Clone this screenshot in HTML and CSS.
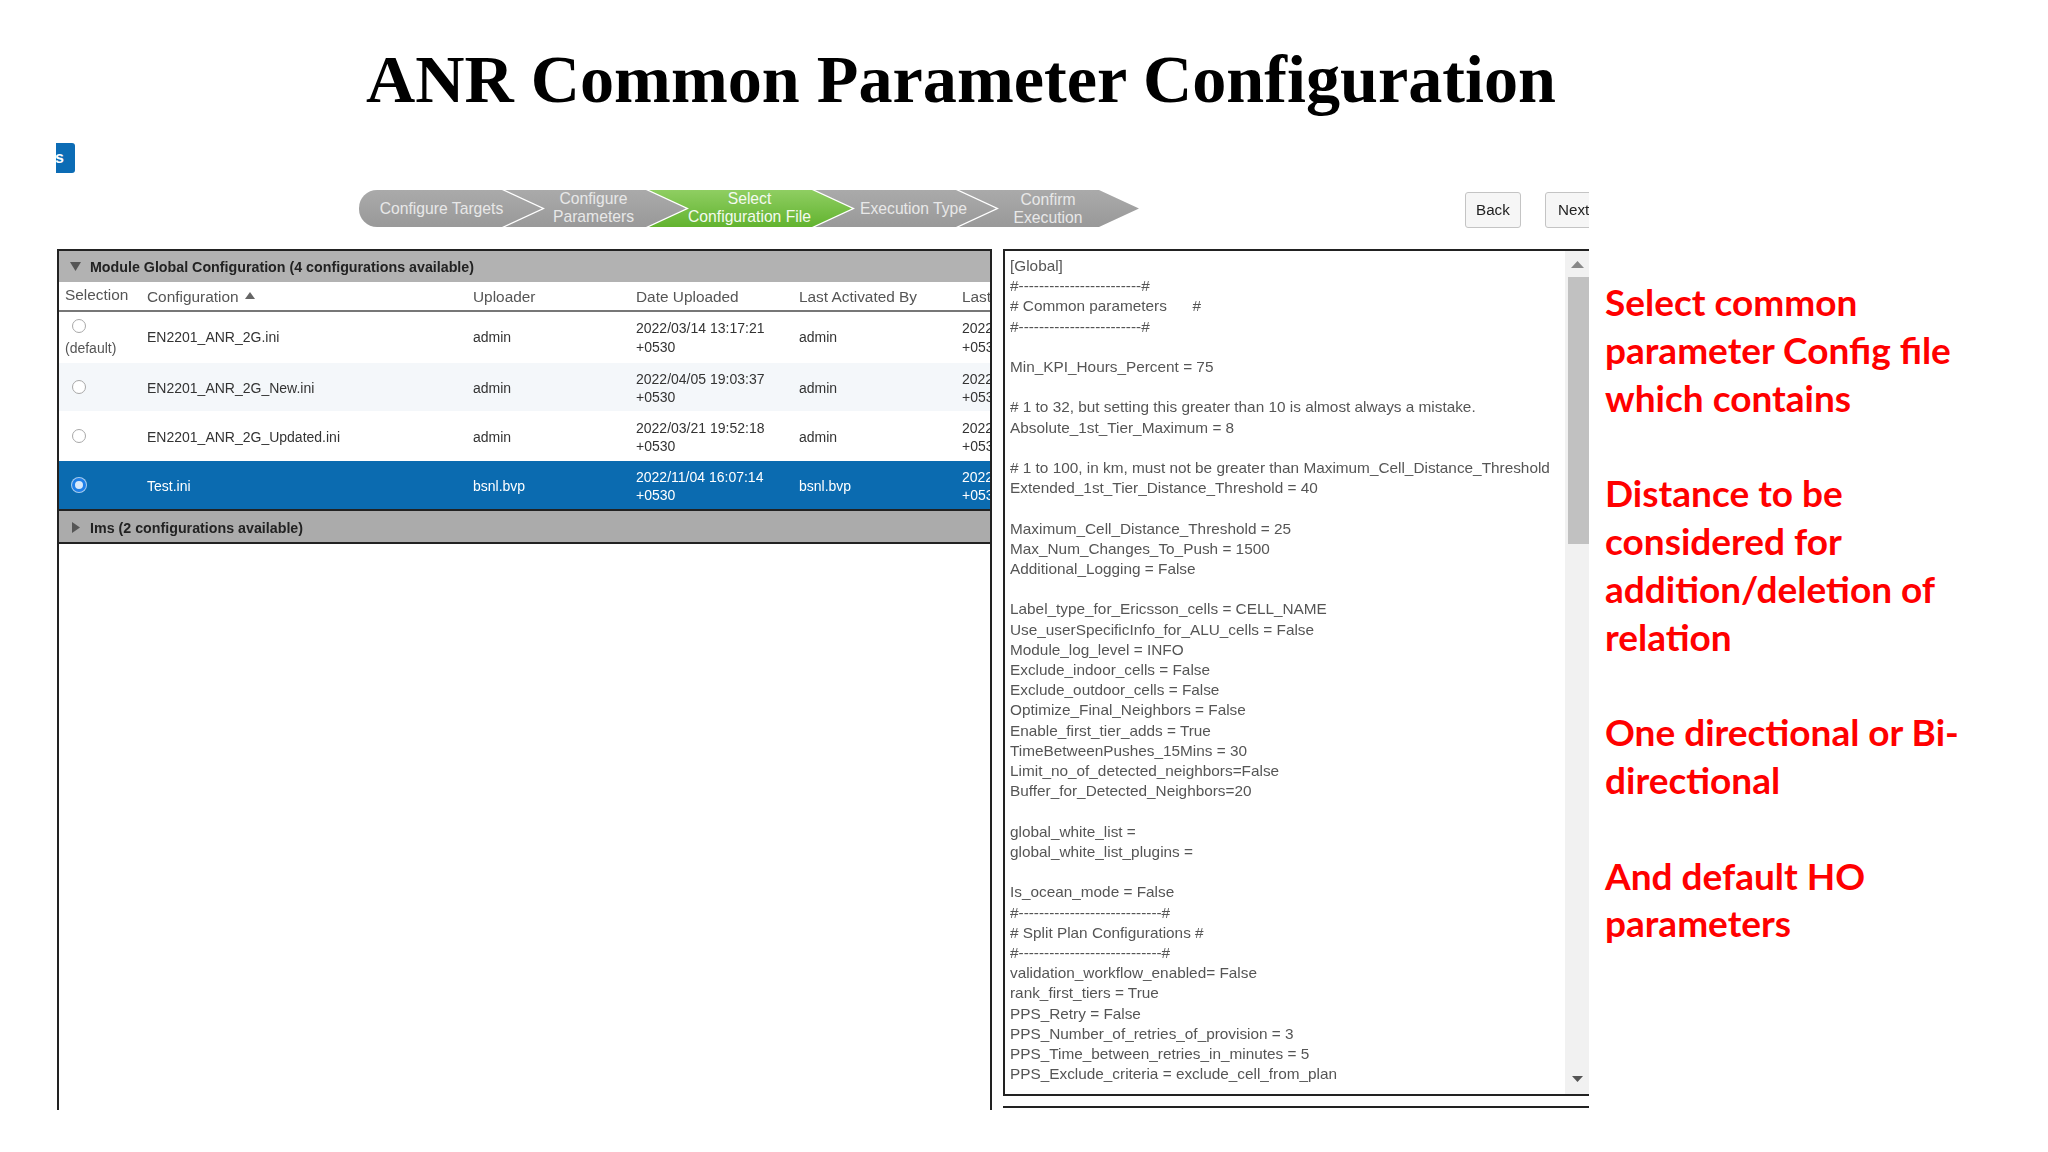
FILE: index.html
```html
<!DOCTYPE html>
<html lang="en">
<head>
<meta charset="utf-8">
<title>ANR Common Parameter Configuration</title>
<link rel="stylesheet" href="styles.css">
</head>
<body>
<div class="page">
  <h1 class="title">ANR Common Parameter Configuration</h1>
  <div class="content">
    <div class="app">
      <div class="tab"><span class="tab-label">s</span></div>
      <div class="toolbar">
        <div class="steps">
          <div class="step step-first">Configure Targets</div>
          <div class="step step-second">Configure<br>Parameters</div>
          <div class="step step-active">Select<br>Configuration File</div>
          <div class="step step-fourth">Execution Type</div>
          <div class="step step-last">Confirm<br>Execution</div>
        </div>
        <div class="buttons">
          <button class="btn btn-back">Back</button>
          <button class="btn btn-next">Next</button>
        </div>
      </div>
      <div class="panels">
        <section class="config-panel">
          <div class="group group-open">
            <svg class="caret" width="11" height="9" viewBox="0 0 11 9"><path d="M0 0h11L5.500 9z"/></svg>
            <span>Module Global Configuration (4 configurations available)</span>
          </div>
          <table class="grid">
            <colgroup><col class="c-sel"><col class="c-conf"><col class="c-std"><col class="c-std"><col class="c-std"><col class="c-last"></colgroup>
            <thead>
              <tr>
                <th>Selection</th>
                <th class="th-low">Configuration <svg class="sort" width="10" height="7" viewBox="0 0 10 7"><path d="M5 0l5 7H0z"/></svg></th>
                <th class="th-low">Uploader</th>
                <th class="th-low">Date Uploaded</th>
                <th class="th-low">Last Activated By</th>
                <th class="th-low cut">Last</th>
              </tr>
            </thead>
            <tbody>
              <tr class="row-a">
                <td class="sel"><input class="radio" type="radio" name="cfg"><div class="default-note">(default)</div></td>
                <td>EN2201_ANR_2G.ini</td><td>admin</td><td>2022/03/14 13:17:21<br>+0530</td><td>admin</td><td class="cut">2022/<br>+0530</td>
              </tr>
              <tr class="row-b">
                <td class="sel"><input class="radio" type="radio" name="cfg"></td>
                <td>EN2201_ANR_2G_New.ini</td><td>admin</td><td>2022/04/05 19:03:37<br>+0530</td><td>admin</td><td class="cut">2022/<br>+0530</td>
              </tr>
              <tr class="row-c">
                <td class="sel"><input class="radio" type="radio" name="cfg"></td>
                <td>EN2201_ANR_2G_Updated.ini</td><td>admin</td><td>2022/03/21 19:52:18<br>+0530</td><td>admin</td><td class="cut">2022/<br>+0530</td>
              </tr>
              <tr class="row-d">
                <td class="sel"><input class="radio radio-on" type="radio" name="cfg" checked></td>
                <td>Test.ini</td><td>bsnl.bvp</td><td>2022/11/04 16:07:14<br>+0530</td><td>bsnl.bvp</td><td class="cut">2022/<br>+0530</td>
              </tr>
            </tbody>
          </table>
          <div class="group group-closed">
            <svg class="caret caret-right" width="8" height="11" viewBox="0 0 8 11"><path d="M0 0l8 5.500L0 11z"/></svg>
            <span>Ims (2 configurations available)</span>
          </div>
        </section>
        <section class="file-column">
          <div class="file-panel">
            <pre class="file-text">[Global]
#------------------------#
# Common parameters      #
#------------------------#

Min_KPI_Hours_Percent = 75

# 1 to 32, but setting this greater than 10 is almost always a mistake.
Absolute_1st_Tier_Maximum = 8

# 1 to 100, in km, must not be greater than Maximum_Cell_Distance_Threshold
Extended_1st_Tier_Distance_Threshold = 40

Maximum_Cell_Distance_Threshold = 25
Max_Num_Changes_To_Push = 1500
Additional_Logging = False

Label_type_for_Ericsson_cells = CELL_NAME
Use_userSpecificInfo_for_ALU_cells = False
Module_log_level = INFO
Exclude_indoor_cells = False
Exclude_outdoor_cells = False
Optimize_Final_Neighbors = False
Enable_first_tier_adds = True
TimeBetweenPushes_15Mins = 30
Limit_no_of_detected_neighbors=False
Buffer_for_Detected_Neighbors=20

global_white_list =
global_white_list_plugins =

Is_ocean_mode = False
#----------------------------#
# Split Plan Configurations #
#----------------------------#
validation_workflow_enabled= False
rank_first_tiers = True
PPS_Retry = False
PPS_Number_of_retries_of_provision = 3
PPS_Time_between_retries_in_minutes = 5
PPS_Exclude_criteria = exclude_cell_from_plan</pre>
            <div class="scrollbar">
              <div class="scroll-btn scroll-up"><svg width="13" height="7" viewBox="0 0 13 7"><path d="M6.500 0L13 7H0z"/></svg></div>
              <div class="scroll-thumb"></div>
              <div class="scroll-rest"></div>
              <div class="scroll-btn scroll-down"><svg width="11" height="6" viewBox="0 0 11 6"><path d="M0 0h11L5.500 6z"/></svg></div>
            </div>
          </div>
          <div class="file-rule"></div>
        </section>
      </div>
    </div>
    <aside class="notes">
      <p>Select common<br>parameter Config file<br>which contains</p>
      <p>Distance to be<br>considered for<br>addition/deletion of<br>relation</p>
      <p>One directional or Bi-<br>directional</p>
      <p>And default HO<br>parameters</p>
    </aside>
  </div>
</div>
</body>
</html>
```

FILE: styles.css
```css
* { box-sizing: border-box; }
html, body { margin: 0; padding: 0; background: #fff; }
.page { width: 2048px; height: 1152px; overflow: hidden; background: #fff; }

.title {
  margin: 0;
  padding: 39px 0 0 366px;
  height: 119px;
  font: bold 68.2px/80px "Liberation Serif", serif;
  color: #000;
  white-space: nowrap;
}

.content { display: flex; margin-top: 24px; padding-left: 56px; }
.app { width: 1533px; flex: none; overflow: hidden; filter: blur(0.35px); }

.tab {
  width: 19px; height: 30px;
  background: #0c6cb5;
  border-radius: 0 3px 3px 0;
  color: #fff;
  font: bold 16px/30px "Liberation Sans", sans-serif;
  overflow: hidden;
}
.tab-label { display: block; margin-left: -1px; }

.toolbar { display: flex; margin-top: 17px; height: 38px; font-family: "Liberation Sans", sans-serif; }
.steps { display: flex; margin-left: 303px; height: 37px; }
.step {
  width: 181px; height: 37px;
  margin-left: -37px;
  padding: 0 36px 2px 38px;
  display: flex; align-items: center; justify-content: center;
  text-align: center;
  font-size: 15.7px; line-height: 18px;
  color: #e8e8e8;
  background: linear-gradient(#aaa, #999);
  clip-path: polygon(0 0, calc(100% - 40px) 0, 100% 50%, calc(100% - 40px) 100%, 0 100%, 40px 50%);
}
.step-first {
  width: 183px; margin-left: 0;
  padding-left: 18px; padding-bottom: 0;
  border-radius: 18px 0 0 18px;
  clip-path: polygon(0 0, calc(100% - 40px) 0, 100% 50%, calc(100% - 40px) 100%, 0 100%);
}
.step-second { padding-left: 35px; padding-right: 39px; }
.step-active { width: 203px; padding-left: 36px; padding-right: 38px; background: linear-gradient(#8fce62, #62b32f); color: #f4faf0; }
.step-fourth { padding-left: 45px; padding-right: 29px; padding-bottom: 0; }
.step-last { width: 180px; padding-left: 36px; padding-right: 38px; padding-bottom: 0; }

.buttons { display: flex; gap: 24px; margin-left: auto; margin-top: 2px; }
.btn {
  height: 36px; padding: 0 0 2px;
  background: #f6f6f6;
  border: 1px solid #c4c4c4;
  border-radius: 3px;
  font: 15.2px "Liberation Sans", sans-serif;
  color: #222;
  text-align: left;
}
.btn-back { width: 56px; padding-left: 10px; }
.btn-next { width: 56px; padding-left: 12px; margin-right: -12px; }

.panels {
  display: flex; gap: 11px;
  margin: 21px 0 0 1px;
  height: 861px;
  font-family: "Liberation Sans", sans-serif;
}

.config-panel {
  width: 935px; flex: none;
  border: solid #222; border-width: 2px 2px 0;
  overflow: hidden;
}
.group {
  display: flex; align-items: center; gap: 9px;
  background: #b2b2b2;
  color: #222;
  font-size: 14.25px; font-weight: bold;
  padding-left: 11px;
}
.group-open { height: 31px; }
.group-closed {
  height: 35px;
  background: #ababab;
  border: solid #222; border-width: 2px 0;
  padding: 2px 0 0 13px; gap: 10px;
}
.caret { fill: #555; flex: none; }

.grid { table-layout: fixed; width: 100%; border-collapse: collapse; font-size: 14px; color: #333; }
.c-sel { width: 88px; }
.c-conf { width: 326px; }
.c-std { width: 163px; }
.grid th {
  height: 29px; padding: 0;
  border-bottom: 2px solid #777;
  font-weight: normal; font-size: 15.4px;
  text-align: left;
  color: #555;
  white-space: nowrap;
  vertical-align: middle;
}
.grid th.th-low { padding-top: 1px; }
.grid th:first-child { padding-left: 6px; padding-bottom: 2px; }
.sort { fill: #666; margin: 0 0 3px 2px; }
.grid td { padding: 0; line-height: 18.4px; vertical-align: middle; white-space: nowrap; }
.grid td.sel { padding-left: 6px; padding-top: 0; color: #555; }
.grid .cut { overflow: hidden; }
.row-a { height: 52px; }
.row-b { height: 48px; background: #f4f7fa; }
.row-c { height: 50px; }
.row-d { height: 48px; background: #0b6bb0; }
.row-b td, .row-c td, .row-d td { padding-top: 2px; }
.row-d td { color: #fff; }

.radio {
  appearance: none;
  display: block;
  width: 14px; height: 14px;
  margin: 0 0 0 7px;
  background: #fff;
  border: 1px solid #a8a8a8;
  border-radius: 50%;
}
.radio-on { border: 3px solid #1f7fe8; background: #d8e9fb; box-shadow: 0 0 0 1px #a9cdee; }
.default-note { margin-top: 6px; line-height: 18px; }

.file-column { flex: 1; min-width: 0; }
.file-panel {
  display: flex;
  height: 847px;
  border: solid #222; border-width: 2px 0 2px 2px;
  background: #fff;
}
.file-text {
  flex: 1; min-width: 0;
  margin: 0; padding: 5px 0 0 5px;
  font: 15.35px/20.2px "Liberation Sans", sans-serif;
  color: #555;
  white-space: pre;
  overflow: hidden;
}
.scrollbar { width: 24px; flex: none; background: #f1f1f1; display: flex; flex-direction: column; }
.scroll-btn { display: flex; align-items: center; justify-content: center; flex: none; }
.scroll-btn svg { fill: #888; }
.scroll-up { height: 26px; padding-top: 1px; }
.scroll-down { height: 30px; }
.scroll-down svg { fill: #555; }
.scroll-thumb { height: 267px; margin-left: 3px; background: #c1c1c1; flex: none; }
.scroll-rest { flex: 1; }
.file-rule { margin-top: 10px; border-top: 2px solid #222; }

.notes {
  margin-left: 16px;
  padding-top: 135px;
  font: bold 37px/47.8px Lato, "Liberation Sans", sans-serif;
  color: #f00;
  white-space: nowrap;
}
.notes p { margin: 0 0 47.8px; }
```
